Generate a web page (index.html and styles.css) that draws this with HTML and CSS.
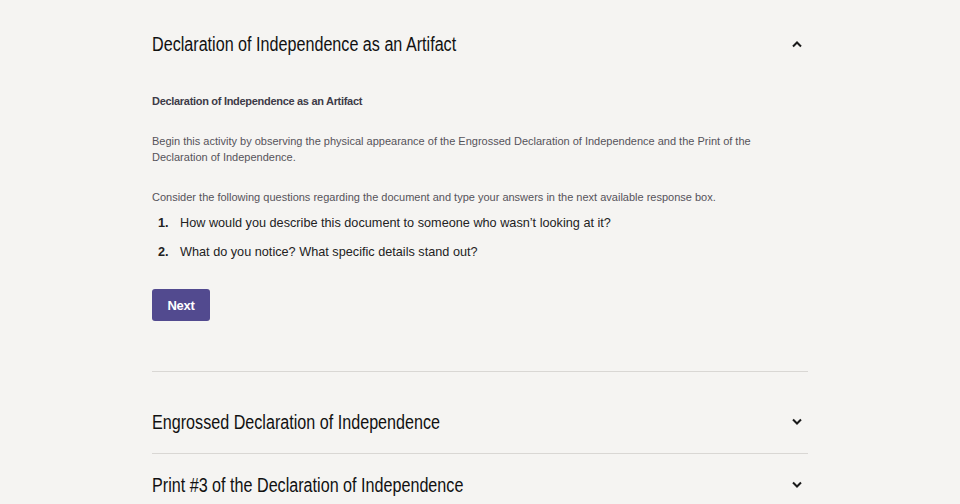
FILE: index.html
```html
<!DOCTYPE html>
<html lang="en">
<head>
<meta charset="utf-8">
<title>Declaration of Independence</title>
<link rel="stylesheet" href="styles.css">
</head>
<body>
<div class="accordion">
  <section class="item open">
    <div class="header">
      <h2 class="title"><span class="narrow">Declaration of Independence as an Artifact</span></h2>
      <svg class="chev" width="12" height="8" viewBox="0 0 12 8"><path d="M2 6.5 L6 2.5 L10 6.5" fill="none" stroke="#1a1a1a" stroke-width="2"/></svg>
    </div>
    <div class="panel">
      <h3 class="subtitle">Declaration of Independence as an Artifact</h3>
      <p class="text">Begin this activity by observing the physical appearance of the Engrossed Declaration of Independence and the Print of the Declaration of Independence.</p>
      <p class="text">Consider the following questions regarding the document and type your answers in the next available response box.</p>
      <ol class="questions">
        <li><span class="num">1.</span><span>How would you describe this document to someone who wasn’t looking at it?</span></li>
        <li><span class="num">2.</span><span>What do you notice? What specific details stand out?</span></li>
      </ol>
      <button class="next">Next</button>
    </div>
  </section>
  <section class="item">
    <div class="header">
      <h2 class="title"><span class="narrow">Engrossed Declaration of Independence</span></h2>
      <svg class="chev" width="12" height="8" viewBox="0 0 12 8"><path d="M2 1.5 L6 5.5 L10 1.5" fill="none" stroke="#1a1a1a" stroke-width="2"/></svg>
    </div>
  </section>
  <section class="item">
    <div class="header">
      <h2 class="title"><span class="narrow">Print #3 of the Declaration of Independence</span></h2>
      <svg class="chev" width="12" height="8" viewBox="0 0 12 8"><path d="M2 1.5 L6 5.5 L10 1.5" fill="none" stroke="#1a1a1a" stroke-width="2"/></svg>
    </div>
  </section>
</div>
</body>
</html>
```
FILE: styles.css
```css
html, body {
  margin: 0;
  padding: 0;
  background: #f5f4f2;
}
body {
  font-family: "Liberation Sans", Arial, sans-serif;
  color: #222;
}
.accordion {
  width: 656px;
  margin: 0 auto;
  padding-top: 13px;
}
.item {
  border-bottom: 1px solid #d9d7d4;
}
.item.open {
  border-bottom: 0;
}
.header {
  display: flex;
  align-items: center;
  justify-content: space-between;
  padding: 19px 0;
}
.title {
  margin: 0;
  font-family: "Liberation Sans", Arial, sans-serif;
  font-weight: 400;
  font-size: 20px;
  line-height: 24px;
  color: #111;
}
.narrow {
  display: inline-block;
  transform: scaleX(0.807);
  transform-origin: left center;
  white-space: nowrap;
}
.chev {
  margin-right: 5px;
}
.panel {
  padding: 18px 0 50px;
  border-bottom: 1px solid #d9d7d4;
  margin-bottom: 19px;
}
.subtitle {
  margin: 0 0 24px;
  font-size: 11px;
  line-height: 16px;
  font-weight: 700;
  color: #3d3b48;
  letter-spacing: -0.3px;
}
.text {
  margin: 0 0 24px;
  font-size: 11px;
  line-height: 16px;
  color: #55535a;
  max-width: 610px;
}
.text + .text {
  margin-bottom: 4px;
}
.questions {
  list-style: none;
  margin: 0 0 22px;
  padding: 0;
}
.questions li {
  display: flex;
  font-size: 12.7px;
  line-height: 29px;
  color: #222;
}
.num {
  width: 28px;
  padding-left: 6px;
  box-sizing: border-box;
  font-weight: 700;
}
.next {
  display: block;
  width: 58px;
  height: 32px;
  border: 0;
  border-radius: 3px;
  background: #524a8f;
  color: #fff;
  font-family: "Liberation Sans", Arial, sans-serif;
  font-weight: 700;
  font-size: 13px;
  letter-spacing: -0.3px;
  padding: 0;
}
```
